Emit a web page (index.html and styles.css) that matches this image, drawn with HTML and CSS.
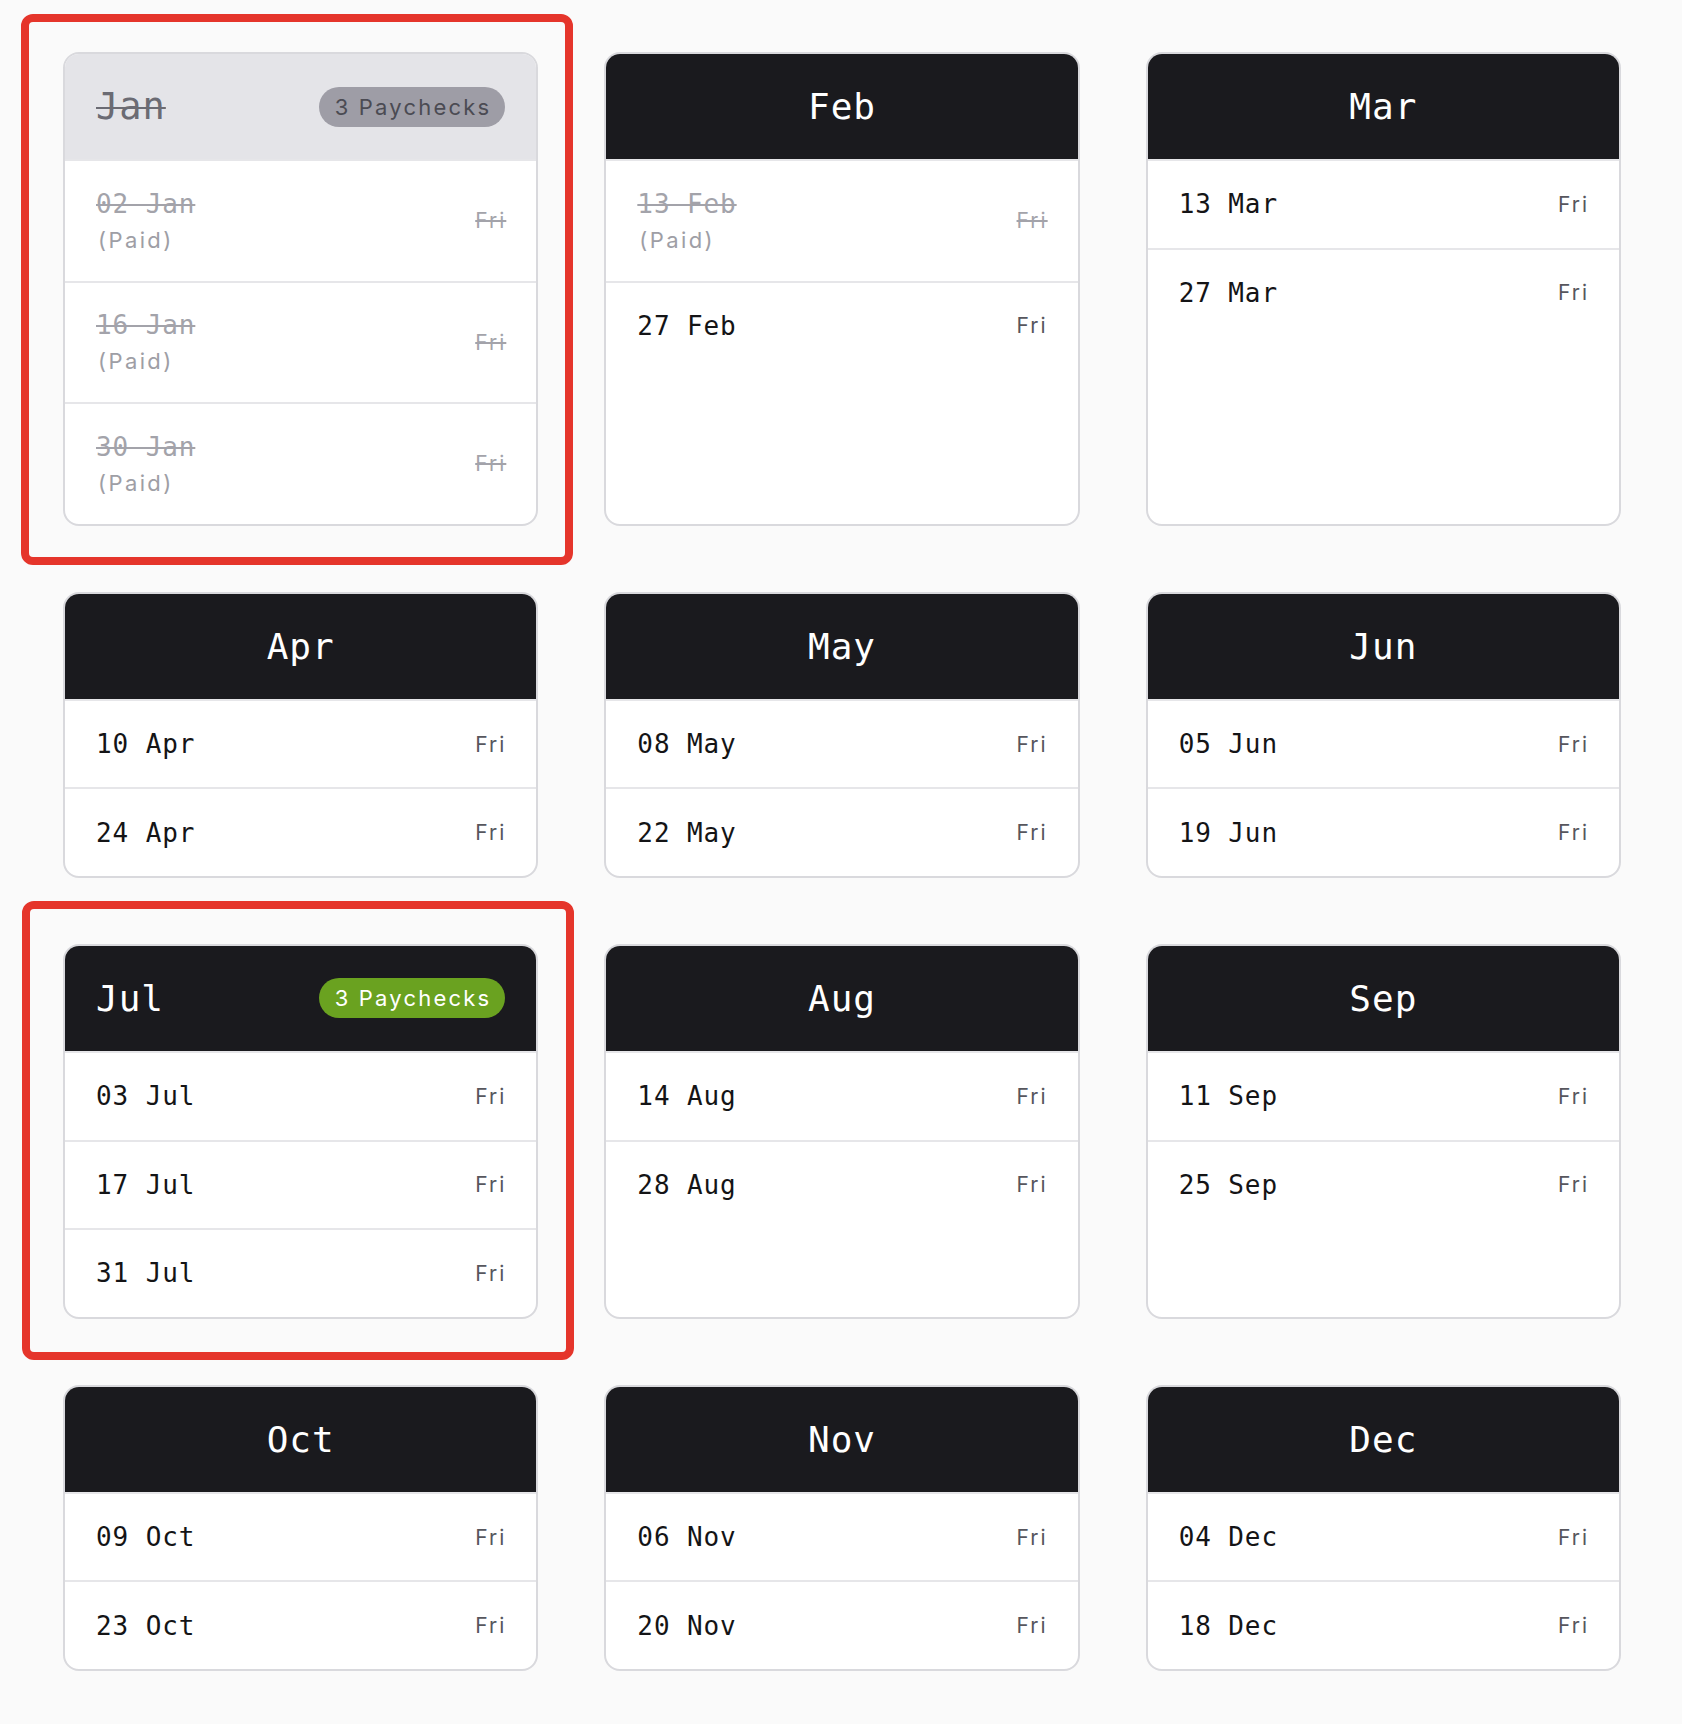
FILE: index.html
```html
<!DOCTYPE html>
<html lang="en">
<head>
<meta charset="utf-8">
<title>Paychecks 2026</title>
<link rel="stylesheet" href="styles.css">
</head>
<body>
<main class="grid">
  <section class="card flagged flag-a">
    <header class="head head-done"><span class="title">Jan</span><span class="badge badge-grey">3 Paychecks</span></header>
    <div class="row paid"><div class="when"><span class="date">02 Jan</span><span class="note">(Paid)</span></div><span class="day">Fri</span></div>
    <div class="row paid"><div class="when"><span class="date">16 Jan</span><span class="note">(Paid)</span></div><span class="day">Fri</span></div>
    <div class="row paid"><div class="when"><span class="date">30 Jan</span><span class="note">(Paid)</span></div><span class="day">Fri</span></div>
  </section>
  <section class="card">
    <header class="head"><span class="title">Feb</span></header>
    <div class="row paid"><div class="when"><span class="date">13 Feb</span><span class="note">(Paid)</span></div><span class="day">Fri</span></div>
    <div class="row"><span class="date">27 Feb</span><span class="day">Fri</span></div>
  </section>
  <section class="card">
    <header class="head"><span class="title">Mar</span></header>
    <div class="row"><span class="date">13 Mar</span><span class="day">Fri</span></div>
    <div class="row"><span class="date">27 Mar</span><span class="day">Fri</span></div>
  </section>

  <section class="card">
    <header class="head"><span class="title">Apr</span></header>
    <div class="row"><span class="date">10 Apr</span><span class="day">Fri</span></div>
    <div class="row"><span class="date">24 Apr</span><span class="day">Fri</span></div>
  </section>
  <section class="card">
    <header class="head"><span class="title">May</span></header>
    <div class="row"><span class="date">08 May</span><span class="day">Fri</span></div>
    <div class="row"><span class="date">22 May</span><span class="day">Fri</span></div>
  </section>
  <section class="card">
    <header class="head"><span class="title">Jun</span></header>
    <div class="row"><span class="date">05 Jun</span><span class="day">Fri</span></div>
    <div class="row"><span class="date">19 Jun</span><span class="day">Fri</span></div>
  </section>

  <section class="card flagged flag-b">
    <header class="head head-split"><span class="title">Jul</span><span class="badge badge-green">3 Paychecks</span></header>
    <div class="row"><span class="date">03 Jul</span><span class="day">Fri</span></div>
    <div class="row"><span class="date">17 Jul</span><span class="day">Fri</span></div>
    <div class="row"><span class="date">31 Jul</span><span class="day">Fri</span></div>
  </section>
  <section class="card">
    <header class="head"><span class="title">Aug</span></header>
    <div class="row"><span class="date">14 Aug</span><span class="day">Fri</span></div>
    <div class="row"><span class="date">28 Aug</span><span class="day">Fri</span></div>
  </section>
  <section class="card">
    <header class="head"><span class="title">Sep</span></header>
    <div class="row"><span class="date">11 Sep</span><span class="day">Fri</span></div>
    <div class="row"><span class="date">25 Sep</span><span class="day">Fri</span></div>
  </section>

  <section class="card">
    <header class="head"><span class="title">Oct</span></header>
    <div class="row"><span class="date">09 Oct</span><span class="day">Fri</span></div>
    <div class="row"><span class="date">23 Oct</span><span class="day">Fri</span></div>
  </section>
  <section class="card">
    <header class="head"><span class="title">Nov</span></header>
    <div class="row"><span class="date">06 Nov</span><span class="day">Fri</span></div>
    <div class="row"><span class="date">20 Nov</span><span class="day">Fri</span></div>
  </section>
  <section class="card">
    <header class="head"><span class="title">Dec</span></header>
    <div class="row"><span class="date">04 Dec</span><span class="day">Fri</span></div>
    <div class="row"><span class="date">18 Dec</span><span class="day">Fri</span></div>
  </section>
</main>
</body>
</html>
```
FILE: styles.css
```css
* { box-sizing: border-box; }

html, body {
  margin: 0;
  background: #fafafa;
}

body {
  font-family: "Inter", "Noto Sans", sans-serif;
  color: #18181b;
}

.grid {
  display: grid;
  grid-template-columns: repeat(3, 1fr);
  column-gap: 66px;
  row-gap: 66px;
  width: 1558px;
  margin: 52px 0 0 63px;
  padding-bottom: 52px;
}

.card {
  position: relative;
  display: flex;
  flex-direction: column;
  background: #ffffff;
  border: 2px solid #d9d9dd;
  border-radius: 16px;
}

.flagged::after {
  content: "";
  position: absolute;
  border: 8px solid #e5352b;
  border-radius: 12px;
  pointer-events: none;
}

.flag-a::after { top: -40px; bottom: -41px; left: -44px; right: -37px; }
.flag-b::after { top: -45px; bottom: -43px; left: -43px; right: -38px; }

.head {
  height: 105px;
  flex: none;
  display: flex;
  align-items: center;
  justify-content: center;
  background: #1a1a1e;
  color: #ffffff;
  border-radius: 14px 14px 0 0;
  padding: 0 31px;
}

.title {
  font-family: "DejaVu Sans Mono", "Liberation Mono", monospace;
  font-size: 36px;
  letter-spacing: 1px;
}

.head-split { justify-content: space-between; }

.head-done {
  justify-content: space-between;
  background: #e4e4e8;
  color: #6b6b73;
}

.head-done .title {
  font-size: 37px;
  text-decoration: line-through;
  text-decoration-thickness: 2px;
}

.badge {
  display: inline-flex;
  align-items: center;
  height: 40px;
  padding: 0 14px 0 16px;
  border-radius: 20px;
  font-family: "Inter", "Noto Sans", sans-serif;
  font-size: 22px;
  letter-spacing: 2.2px;
}

.badge-grey { background: #9e9da6; color: #4b4b53; }
.badge-green { background: #6aa220; color: #ffffff; }

.row {
  height: 88.6px;
  flex: none;
  display: flex;
  align-items: center;
  justify-content: space-between;
  padding: 0 30px 0 31px;
}

.row + .row { border-top: 2px solid #e6e6e9; }
.head + .row { border-top: 2px solid #e6e6e9; }

.row.paid { height: 121.6px; }

.date {
  font-family: "DejaVu Sans Mono", "Liberation Mono", monospace;
  font-size: 26px;
  letter-spacing: 0.9px;
  color: #141416;
}

.day {
  font-family: "Inter", "Noto Sans", sans-serif;
  font-size: 21px;
  letter-spacing: 2px;
  color: #56565d;
}

.when {
  display: flex;
  flex-direction: column;
  gap: 8px;
}

.note {
  font-family: "Inter", "Noto Sans", sans-serif;
  font-size: 22px;
  letter-spacing: 2.4px;
  color: #9e9ea5;
  padding-left: 2px;
}

.paid .date,
.paid .day {
  color: #a3a3aa;
  text-decoration: line-through;
}
```
